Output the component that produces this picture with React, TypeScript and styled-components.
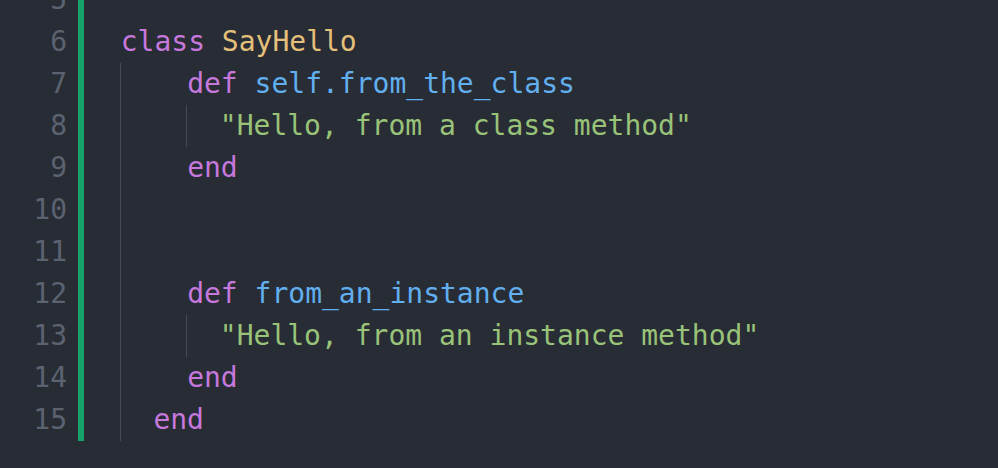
import React from "react";
import styled, { createGlobalStyle } from "styled-components";

const Global = createGlobalStyle`
  html, body { margin: 0; padding: 0; background: #282c34; }
  body { font-family: "DejaVu Sans Mono", "Liberation Mono", monospace; }
`;

const Editor = styled.div`
  width: 998px;
  height: 468px;
  overflow: hidden;
  background: #282c34;
`;

const Lines = styled.div`
  display: flex;
  flex-direction: column;
  margin-top: -21px;
`;

const Row = styled.div`
  display: flex;
  height: 42px;
  font-size: 28px;
  line-height: 42px;
`;

const Num = styled.div`
  width: 67px;
  padding-right: 11px;
  text-align: right;
  color: #5b6270;
  flex: none;
`;

const Marker = styled.div`
  width: 6px;
  flex: none;
  background: #18a26b;
`;

const Code = styled.div`
  padding-left: 3px;
  white-space: pre;
  display: flex;
  align-items: stretch;
`;

const Pad = styled.span<{ $cols: number; $guide?: boolean }>`
  display: inline-block;
  width: ${(p) => p.$cols}ch;
  height: 42px;
  box-sizing: border-box;
  border-left: ${(p) => (p.$guide ? "1px solid #444b57" : "none")};
  margin-left: ${(p) => (p.$guide ? "-1px" : "0")};
  flex: none;
`;

const Tok = styled.span<{ $c: string }>`
  color: ${(p) => p.$c};
`;

const K = "#c678dd";
const Y = "#e5c07b";
const B = "#61afef";
const G = "#98c379";
const W = "#abb2bf";

type Seg = { pad?: number; guide?: boolean; text?: string; color?: string };

const lines: { n: number; segs: Seg[] }[] = [
  { n: 5, segs: [] },
  {
    n: 6,
    segs: [
      { pad: 2 },
      { text: "class", color: K },
      { text: " ", color: W },
      { text: "SayHello", color: Y },
    ],
  },
  {
    n: 7,
    segs: [
      { pad: 2 },
      { pad: 4, guide: true },
      { text: "def", color: K },
      { text: " ", color: W },
      { text: "self.from_the_class", color: B },
    ],
  },
  {
    n: 8,
    segs: [
      { pad: 2 },
      { pad: 4, guide: true },
      { pad: 2, guide: true },
      { text: '"Hello, from a class method"', color: G },
    ],
  },
  {
    n: 9,
    segs: [{ pad: 2 }, { pad: 4, guide: true }, { text: "end", color: K }],
  },
  { n: 10, segs: [{ pad: 2 }, { pad: 4, guide: true }] },
  { n: 11, segs: [{ pad: 2 }, { pad: 4, guide: true }] },
  {
    n: 12,
    segs: [
      { pad: 2 },
      { pad: 4, guide: true },
      { text: "def", color: K },
      { text: " ", color: W },
      { text: "from_an_instance", color: B },
    ],
  },
  {
    n: 13,
    segs: [
      { pad: 2 },
      { pad: 4, guide: true },
      { pad: 2, guide: true },
      { text: '"Hello, from an instance method"', color: G },
    ],
  },
  {
    n: 14,
    segs: [{ pad: 2 }, { pad: 4, guide: true }, { text: "end", color: K }],
  },
  {
    n: 15,
    segs: [{ pad: 2 }, { pad: 2, guide: true }, { text: "end", color: K }],
  },
];

export default function App() {
  return (
    <>
      <Global />
      <Editor>
        <Lines>
          {lines.map((l) => (
            <Row key={l.n}>
              <Num>{l.n}</Num>
              <Marker />
              <Code>
                {l.segs.map((s, i) =>
                  s.pad ? (
                    <Pad key={i} $cols={s.pad} $guide={s.guide} />
                  ) : (
                    <Tok key={i} $c={s.color || W}>
                      {s.text}
                    </Tok>
                  )
                )}
              </Code>
            </Row>
          ))}
        </Lines>
      </Editor>
    </>
  );
}
